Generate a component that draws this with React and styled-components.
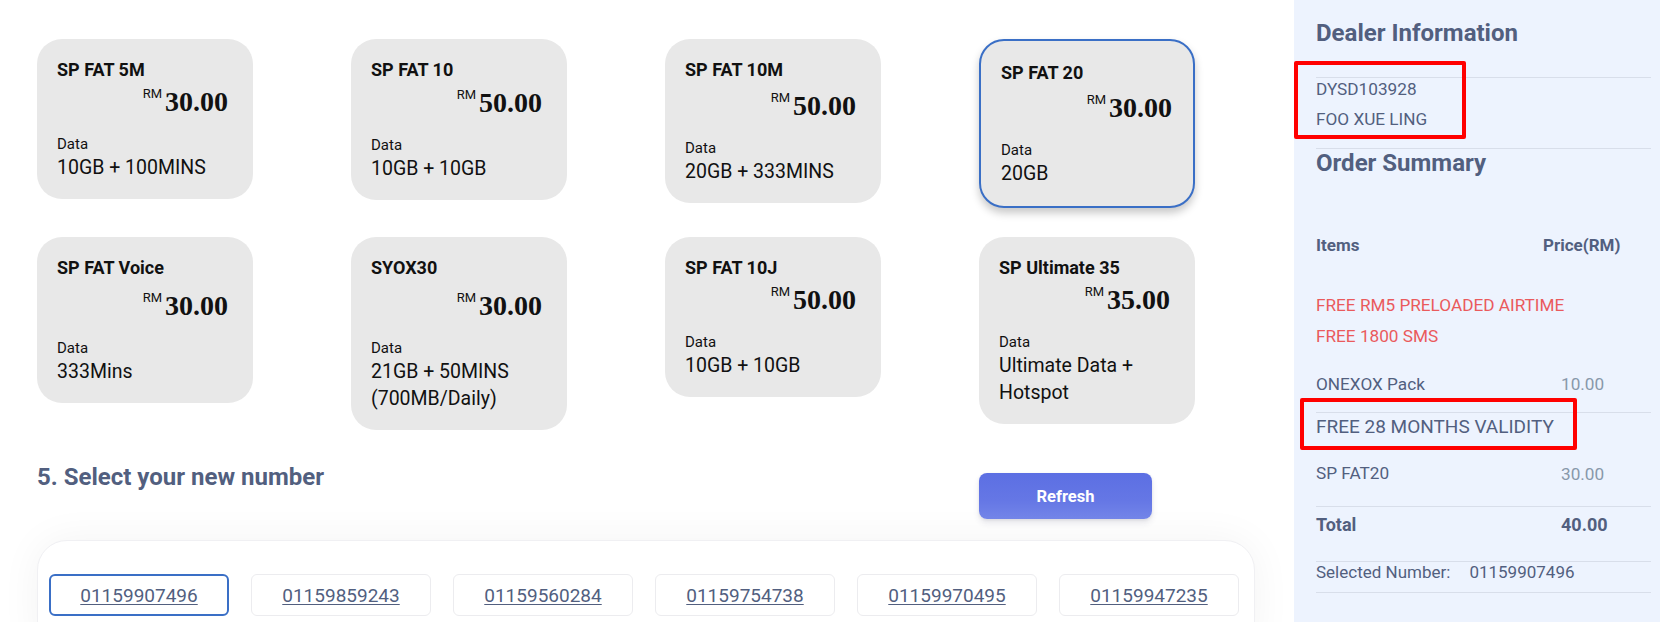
import styled, { createGlobalStyle } from 'styled-components';

const GlobalStyle = createGlobalStyle`
  html, body {
    margin: 0;
    padding: 0;
  }
  body {
    font-family: Roboto, "Liberation Sans", sans-serif;
    background: #fff;
    overflow: hidden;
  }
  * {
    box-sizing: border-box;
  }
`;

const plans = [
  { name: 'SP FAT 5M', price: '30.00', data: '10GB + 100MINS', shift: 0 },
  { name: 'SP FAT 10', price: '50.00', data: '10GB + 10GB', shift: 1 },
  { name: 'SP FAT 10M', price: '50.00', data: '20GB + 333MINS', shift: 4 },
  { name: 'SP FAT 20', price: '30.00', data: '20GB', shift: 3, selected: true },
  { name: 'SP FAT Voice', price: '30.00', data: '333Mins', shift: 6 },
  { name: 'SYOX30', price: '30.00', data: '21GB + 50MINS (700MB/Daily)', shift: 6 },
  { name: 'SP FAT 10J', price: '50.00', data: '10GB + 10GB', shift: 0 },
  { name: 'SP Ultimate 35', price: '35.00', data: 'Ultimate Data + Hotspot', shift: 0 },
];

const numbers = ['01159907496', '01159859243', '01159560284', '01159754738', '01159970495', '01159947235'];

const Page = styled.div`
  display: flex;
  height: 100vh;
  overflow: hidden;
`;

const Main = styled.main`
  flex: 1;
  padding: 39px 39px 0 37px;
`;

const PlanGrid = styled.div`
  display: grid;
  grid-template-columns: repeat(4, 216px);
  column-gap: 98px;
  row-gap: 29px;
  align-items: start;
`;

const PlanCard = styled.div`
  background: #e8e8e8;
  border-radius: 25px;
  color: #111;
  padding: ${(props) => (props.$selected ? '21px 21px 19px 20px' : '20px 25px 18px 20px')};
  border: ${(props) => (props.$selected ? '2px solid #3a6fc6' : '0')};
  box-shadow: ${(props) => (props.$selected ? '0 5px 8px rgba(0, 0, 0, 0.22)' : 'none')};
`;

const PlanName = styled.div`
  font-size: 18px;
  line-height: 22px;
  font-weight: 700;
`;

const PriceRow = styled.div`
  display: flex;
  justify-content: flex-end;
  align-items: flex-start;
  gap: 3px;
  margin-top: ${(props) => 7 + props.$shift}px;
`;

const Currency = styled.span`
  font-size: 13px;
  line-height: 13px;
  margin-top: -1px;
`;

const Amount = styled.span`
  font-family: "Liberation Serif", "Times New Roman", serif;
  font-weight: 700;
  font-size: 28px;
  line-height: 28px;
`;

const DataLabel = styled.div`
  margin-top: 19px;
  font-size: 15px;
  line-height: 18px;
`;

const DataValue = styled.div`
  margin-top: 1px;
  font-size: 19.5px;
  line-height: 27px;
`;

const SectionHeader = styled.div`
  display: grid;
  grid-template-columns: repeat(4, 216px);
  column-gap: 98px;
  margin-top: 33px;
`;

const SectionTitle = styled.h2`
  grid-column: 1 / 4;
  margin: 0;
  font-size: 24px;
  line-height: 28px;
  font-weight: 700;
  color: #525f7f;
`;

const RefreshButton = styled.button`
  margin-top: 10px;
  width: 173px;
  height: 46px;
  border: 0;
  border-radius: 8px;
  background: linear-gradient(180deg, #5c6fe3 0%, #6577e5 60%, #7385e8 100%);
  color: #fff;
  font-family: Roboto, "Liberation Sans", sans-serif;
  font-size: 16.5px;
  font-weight: 700;
  box-shadow: 0 4px 6px rgba(50, 50, 93, 0.11), 0 1px 3px rgba(0, 0, 0, 0.08);
  cursor: pointer;
`;

const NumberPanel = styled.div`
  margin-top: 21px;
  width: 1218px;
  border: 1px solid #f0f0f3;
  border-radius: 30px;
  background: #fff;
  box-shadow: 0 0 40px rgba(0, 0, 0, 0.05);
  padding: 33px 15px 40px 11px;
`;

const NumberGrid = styled.div`
  display: grid;
  grid-template-columns: repeat(6, 180px);
  column-gap: 22px;
`;

const NumberButton = styled.button`
  height: 42px;
  border-radius: 6px;
  background: #fff;
  border: ${(props) => (props.$selected ? '2px solid #3a6fc6' : '1px solid #ececef')};
  color: #525f7f;
  font-family: Roboto, "Liberation Sans", sans-serif;
  font-size: 19px;
  text-decoration: underline;
  text-underline-offset: 2px;
  padding: 0;
  cursor: pointer;
`;

const Sidebar = styled.aside`
  position: relative;
  width: 366px;
  flex-shrink: 0;
  background: #edf3fe;
  padding: 19px 9px 0 22px;
  color: #525f7f;
`;

const SideTitle = styled.h3`
  margin: 0;
  font-size: 24px;
  line-height: 28px;
  font-weight: 700;
  color: #525f7f;
`;

const Divider = styled.div`
  height: 1px;
  background: #d8deea;
  margin-top: ${(props) => props.$top || 0}px;
`;

const Line = styled.div`
  font-size: 17.2px;
  line-height: 20px;
  margin-top: ${(props) => props.$top || 0}px;
  color: ${(props) => (props.$promo ? '#ea5a5c' : '#525f7f')};
`;

const Row = styled.div`
  display: grid;
  grid-template-columns: ${(props) => props.$col || 245}px 1fr;
  align-items: start;
  margin-top: ${(props) => props.$top || 0}px;
  font-size: ${(props) => (props.$bold ? '18px' : '17.2px')};
  line-height: ${(props) => (props.$bold ? '22px' : '20px')};
  font-weight: ${(props) => (props.$bold ? 700 : 400)};
`;

const HeadRow = styled(Row)`
  font-size: 17px;
  font-weight: 700;
`;

const Value = styled.span`
  color: ${(props) => (props.$muted ? '#8898aa' : '#525f7f')};
  margin-top: ${(props) => props.$drop || 0}px;
`;

const Validity = styled.div`
  margin-top: 3px;
  font-size: 19px;
  line-height: 22px;
`;

const SelectedRow = styled.div`
  display: flex;
  gap: 19px;
  font-size: 17px;
  line-height: 20px;
`;

const Annotation = styled.div`
  position: absolute;
  border: 4px solid #ff0000;
  border-radius: 2px;
  pointer-events: none;
`;

export default function App() {
  return (
    <Page>
      <GlobalStyle />
      <Main>
        <PlanGrid>
          {plans.map((plan) => (
            <PlanCard key={plan.name} $selected={plan.selected}>
              <PlanName>{plan.name}</PlanName>
              <PriceRow $shift={plan.shift}>
                <Currency>RM</Currency>
                <Amount>{plan.price}</Amount>
              </PriceRow>
              <DataLabel>Data</DataLabel>
              <DataValue>{plan.data}</DataValue>
            </PlanCard>
          ))}
        </PlanGrid>

        <SectionHeader>
          <SectionTitle>5. Select your new number</SectionTitle>
          <RefreshButton>Refresh</RefreshButton>
        </SectionHeader>

        <NumberPanel>
          <NumberGrid>
            {numbers.map((num, index) => (
              <NumberButton key={num} $selected={index === 0}>
                {num}
              </NumberButton>
            ))}
          </NumberGrid>
        </NumberPanel>
      </Main>

      <Sidebar>
        <SideTitle>Dealer Information</SideTitle>
        <Divider $top={30} />
        <Line $top={1}>DYSD103928</Line>
        <Line $top={10}>FOO XUE LING</Line>
        <Divider $top={19} />
        <SideTitle>Order Summary</SideTitle>

        <HeadRow $top={58} $col={227}>
          <span>Items</span>
          <span>Price(RM)</span>
        </HeadRow>

        <Line $top={40} $promo>FREE RM5 PRELOADED AIRTIME</Line>
        <Line $top={11} $promo>FREE 1800 SMS</Line>

        <Row $top={28}>
          <span>ONEXOX Pack</span>
          <Value $muted>10.00</Value>
        </Row>
        <Divider $top={18} />
        <Validity>FREE 28 MONTHS VALIDITY</Validity>
        <Row $top={25}>
          <span>SP FAT20</span>
          <Value $muted $drop={1}>30.00</Value>
        </Row>
        <Divider $top={22} />
        <Row $top={7} $bold>
          <span>Total</span>
          <Value>40.00</Value>
        </Row>
        <Divider $top={25} />
        <SelectedRow>
          <span>Selected Number:</span>
          <span>01159907496</span>
        </SelectedRow>
        <Divider $top={10} />

        <Annotation style={{ left: 0, top: 61, width: 172, height: 78 }} />
        <Annotation style={{ left: 6, top: 398, width: 277, height: 52 }} />
      </Sidebar>
    </Page>
  );
}
